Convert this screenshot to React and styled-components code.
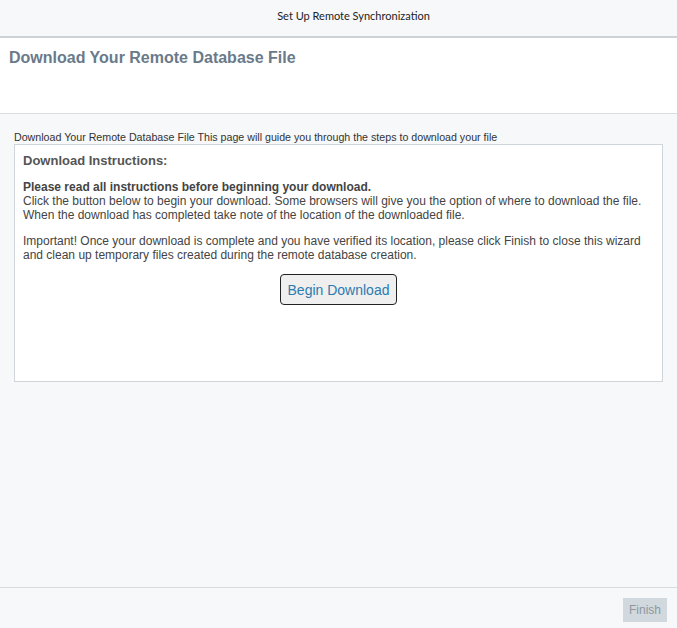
import React from 'react'
import styled, { createGlobalStyle } from 'styled-components'

const GlobalStyle = createGlobalStyle`
  html, body {
    margin: 0;
    padding: 0;
    height: 100%;
  }
  body {
    font-family: "Liberation Sans", Arial, sans-serif;
    background: #f7f8fa;
  }
  #root {
    height: 100%;
  }
`

const Wizard = styled.div`
  width: 677px;
  height: 628px;
  display: flex;
  flex-direction: column;
  background: #f7f8fa;
`

const TitleBar = styled.div`
  height: 38px;
  display: flex;
  align-items: center;
  justify-content: center;
  padding: 0 0 6px 30px;
  box-sizing: border-box;
  border-bottom: 2px solid #cfd2d5;
  font-family: Lato, "Open Sans", sans-serif;
  font-size: 11px;
  color: #222;
`

const StepHeader = styled.div`
  height: 76px;
  background: #fff;
  border-bottom: 1px solid #d8dde2;
  padding: 11px 9px 0;
  box-sizing: border-box;
`

const StepTitle = styled.h2`
  margin: 0;
  font-size: 16px;
  font-weight: bold;
  color: #6a7a8a;
`

const Body = styled.div`
  flex: 1;
  padding: 17px 14px 0 14px;
`

const Intro = styled.div`
  font-size: 8pt;
  color: #333;
  line-height: 12px;
  margin-bottom: 1px;
`

const Panel = styled.div`
  background: #fff;
  border: 1px solid #cfd5da;
  height: 238px;
  box-sizing: border-box;
  padding: 9px 8px 7px;
  color: #444;
  font-size: 12px;
  line-height: 14px;
`

const PanelTitle = styled.div`
  font-size: 13px;
  font-weight: bold;
  color: #555;
  margin-bottom: 12px;
`

const Para = styled.p`
  margin: 0 0 12px;
`

const Center = styled.div`
  display: flex;
  justify-content: center;
`

const BeginButton = styled.button`
  font-family: "Liberation Sans", Arial, sans-serif;
  font-size: 14px;
  color: #2b7bb0;
  background: #efefef;
  border: 1px solid #222;
  border-radius: 4px;
  width: 117px;
  height: 31px;
  padding: 0;
`

const Footer = styled.div`
  height: 41px;
  border-top: 1px solid #d8dcdf;
  display: flex;
  justify-content: flex-end;
  align-items: flex-start;
  padding: 10px 10px 0 0;
  box-sizing: border-box;
`

const FinishButton = styled.button`
  font-family: "Liberation Sans", Arial, sans-serif;
  font-size: 12px;
  color: #8e979f;
  background: #d1d9de;
  border: none;
  width: 44px;
  height: 24px;
  padding: 0;
`

export default function App() {
  return (
    <Wizard>
      <GlobalStyle />
      <TitleBar>Set Up Remote Synchronization</TitleBar>
      <StepHeader>
        <StepTitle>Download Your Remote Database File</StepTitle>
      </StepHeader>
      <Body>
        <Intro>
          Download Your Remote Database File This page will guide you through the steps to download your file
        </Intro>
        <Panel>
          <PanelTitle>Download Instructions:</PanelTitle>
          <Para>
            <strong>Please read all instructions before beginning your download.</strong>
            <br />
            Click the button below to begin your download. Some browsers will give you the option of where to download the file.
            When the download has completed take note of the location of the downloaded file.
          </Para>
          <Para>
            Important! Once your download is complete and you have verified its location, please click Finish to close this wizard
            and clean up temporary files created during the remote database creation.
          </Para>
          <Center>
            <BeginButton>Begin Download</BeginButton>
          </Center>
        </Panel>
      </Body>
      <Footer>
        <FinishButton disabled>Finish</FinishButton>
      </Footer>
    </Wizard>
  )
}
